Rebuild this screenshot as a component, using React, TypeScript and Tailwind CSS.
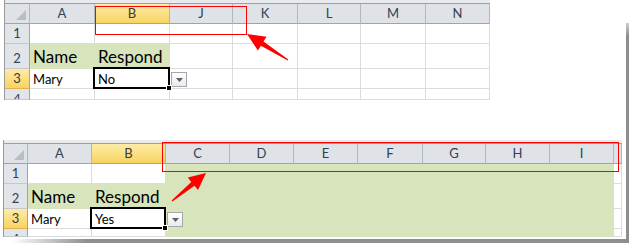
import React from 'react';

type CellInfo = { text?: string; big?: boolean; green?: boolean; active?: boolean };

interface SheetProps {
  cols: string[];
  rows: string[];
  selCol: number;
  selRow: number;
  gridClass: string;
  getCell: (r: number, c: number) => CellInfo;
}

const Corner: React.FC = () => (
  <div className="relative bg-[#dfe3e8] border-r border-b border-r-[#b2b7bd] border-b-[#9ea4ab]">
    <svg className="absolute right-[3px] bottom-[3px]" width="10" height="10" viewBox="0 0 10 10">
      <polygon points="10,0 10,10 0,10" fill="#b9bec6" />
    </svg>
  </div>
);

const Sheet: React.FC<SheetProps> = ({ cols, rows, selCol, selRow, gridClass, getCell }) => {
  const last = rows.length - 1;
  return (
    <div className="border-l border-[#9a9a9a] font-['Lato',sans-serif]">
      {/* strip under the formula bar */}
      <div className="h-[4px] bg-[#e8eaee] border-b border-[#9aa0a8]" />
      <div className={`grid ${gridClass}`}>
        <Corner />
        {cols.map((label, c) => (
          <div
            key={'h' + c}
            className={`flex items-center justify-center border-r border-b text-[13px] leading-none ${
              c === selCol
                ? 'bg-linear-to-b from-[#fdeca6] to-[#f8d35e] border-r-[#e2b04e] border-b-[#e09a30] text-[#3a3a3a]'
                : 'bg-[#dfe3e8] border-r-[#b2b7bd] border-b-[#9ea4ab] text-[#33414f]'
            }`}
          >
            {label}
          </div>
        ))}
        {rows.map((label, r) => (
          <React.Fragment key={'r' + r}>
            <div
              className={`flex justify-center overflow-hidden border-r border-b text-[13px] leading-[16px] ${
                r === last ? 'items-start pt-[2px]' : 'items-end pb-[2px]'
              } ${
                r === selRow
                  ? 'bg-linear-to-b from-[#fdeca6] to-[#f8d35e] border-r-[#e09a30] border-b-[#e2b04e] text-[#3a3a3a]'
                  : 'bg-[#e1e5ea] border-r-[#9ea4ab] border-b-[#c4c8cd] text-[#33414f]'
              }`}
            >
              {label}
            </div>
            {cols.map((_, c) => {
              const cell = getCell(r, c);
              return (
                <div
                  key={'c' + r + '-' + c}
                  className={`relative flex items-end pl-[3px] border-r border-b text-black whitespace-nowrap ${
                    cell.green ? 'bg-[#d8e4bc] border-[#d8e4bc]' : 'bg-white border-[#dadcde]'
                  } ${cell.big ? 'text-[17px] leading-[22px]' : 'text-[13px] leading-[17px]'}`}
                >
                  {cell.text}
                  {cell.active && (
                    <>
                      <div className="absolute -left-[2px] -top-[2px] -right-[1px] -bottom-[1px] border-2 border-black z-10" />
                      <div className="absolute -right-[3px] -bottom-[3px] w-[6px] h-[6px] bg-black border border-white z-20" />
                      <div className="absolute left-[calc(100%+2px)] top-[3px] w-[16px] h-[15px] border border-[#a4a7ab] bg-linear-to-b from-white to-[#e9eaec] flex items-center justify-center z-10">
                        <svg width="7" height="4" viewBox="0 0 7 4">
                          <polygon points="0,0 7,0 3.5,4" fill="#5b5f66" />
                        </svg>
                      </div>
                    </>
                  )}
                </div>
              );
            })}
          </React.Fragment>
        ))}
      </div>
    </div>
  );
};

export default function App() {
  const topCell = (r: number, c: number): CellInfo => {
    if (r === 1 && c === 0) return { text: 'Name', big: true, green: true };
    if (r === 1 && c === 1) return { text: 'Respond', big: true, green: true };
    if (r === 2 && c === 0) return { text: 'Mary' };
    if (r === 2 && c === 1) return { text: 'No', active: true };
    return {};
  };

  const bottomCell = (r: number, c: number): CellInfo => {
    if (r === 1 && c === 0) return { text: 'Name', big: true, green: true };
    if (r === 1 && c === 1) return { text: 'Respond', big: true, green: true };
    if (r === 2 && c === 0) return { text: 'Mary' };
    if (r === 2 && c === 1) return { text: 'Yes', active: true };
    if (c >= 2 && c <= 8) return { green: true };
    return {};
  };

  return (
    <div className="relative w-[629px] h-[243px] bg-white overflow-hidden">
      <div className="pl-[4px] w-[490px]">
        <Sheet
          cols={['A', 'B', 'J', 'K', 'L', 'M', 'N']}
          rows={['1', '2', '3', '4']}
          selCol={1}
          selRow={2}
          gridClass="grid-cols-[25px_65px_75px_63px_65px_63px_65px_64px] grid-rows-[20px_20px_25px_20px_11px]"
          getCell={topCell}
        />
      </div>

      <div className="h-[40px]" />

      <div className="pl-[3px] w-[622px]">
        <Sheet
          cols={['A', 'B', 'C', 'D', 'E', 'F', 'G', 'H', 'I', '']}
          rows={['1', '2', '3', '4']}
          selCol={1}
          selRow={2}
          gridClass="grid-cols-[24px_64px_74px_64px_64px_64px_65px_63px_64px_64px_8px] grid-rows-[20px_20px_25px_20px_8px]"
          getCell={bottomCell}
        />
      </div>

      {/* drop shadow of the lower picture */}
      <div className="absolute right-0 top-[23px] w-[3px] h-[220px] bg-linear-to-b from-[#d0d0d0] from-0% to-[#8e8e8e] to-[6%]" />
      <div className="absolute left-0 right-0 bottom-0 h-[4px] bg-linear-to-r from-white from-[2%] to-[#8e8e8e] to-[14%]" />

      {/* red callouts */}
      <div className="absolute left-[95px] top-[6px] w-[152px] h-[29px] border-[1.5px] border-[#ff0000] z-30" />
      <div className="absolute left-[162px] top-[142px] w-[457px] h-[30px] border-[1.5px] border-[#ff0000] z-30" />
      <svg className="absolute inset-0 z-30" width="629" height="243" viewBox="0 0 629 243">
        <polygon
          points="247,34 266.5,36.8 263.5,41.5 288.3,59.6 287.7,60.4 260.9,45.7 257.9,50.4"
          fill="#ff0000"
        />
        <polygon
          points="206,173 198,190 194.5,185.7 172.4,201.5 171.6,200.5 191.3,181.9 187.8,177.6"
          fill="#ff0000"
        />
      </svg>
    </div>
  );
}
